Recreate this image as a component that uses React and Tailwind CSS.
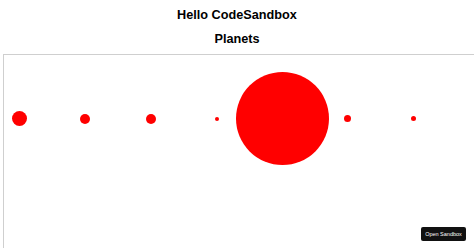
import React from 'react';

// planet diameters, left to right
const planets = [15, 10, 10, 4, 93, 7, 5.5];

export default function App() {
  return (
    <div className="h-screen bg-white text-black font-['Liberation_Sans',Arial,sans-serif] overflow-hidden">
      <h1 className="pt-[8px] h-[23px] leading-[15px] text-[12.7px] font-bold text-center">Hello CodeSandbox</h1>
      <h2 className="mt-[9px] h-[15px] leading-[15px] text-[12.7px] font-bold text-center">Planets</h2>

      {/* preview frame */}
      <div className="relative mt-[7px] ml-[3px] w-[490px] h-[196px] border border-[#cfcfcf]">
        <div className="flex items-center gap-[34.7px] pt-[17px]">
          {planets.map((d, i) => (
            <div key={i} className="w-[31px] h-[93px] flex items-center justify-center shrink-0">
              <div className="rounded-full bg-[#ff0000] shrink-0" style={{ width: d, height: d }} />
            </div>
          ))}
        </div>

        <button className="absolute left-[417px] top-[172px] w-[45px] h-[14px] rounded-[2px] bg-[#111] text-white text-[5.5px] leading-[14px] text-center font-['Liberation_Sans',Arial,sans-serif]">
          Open Sandbox
        </button>
      </div>
    </div>
  );
}
